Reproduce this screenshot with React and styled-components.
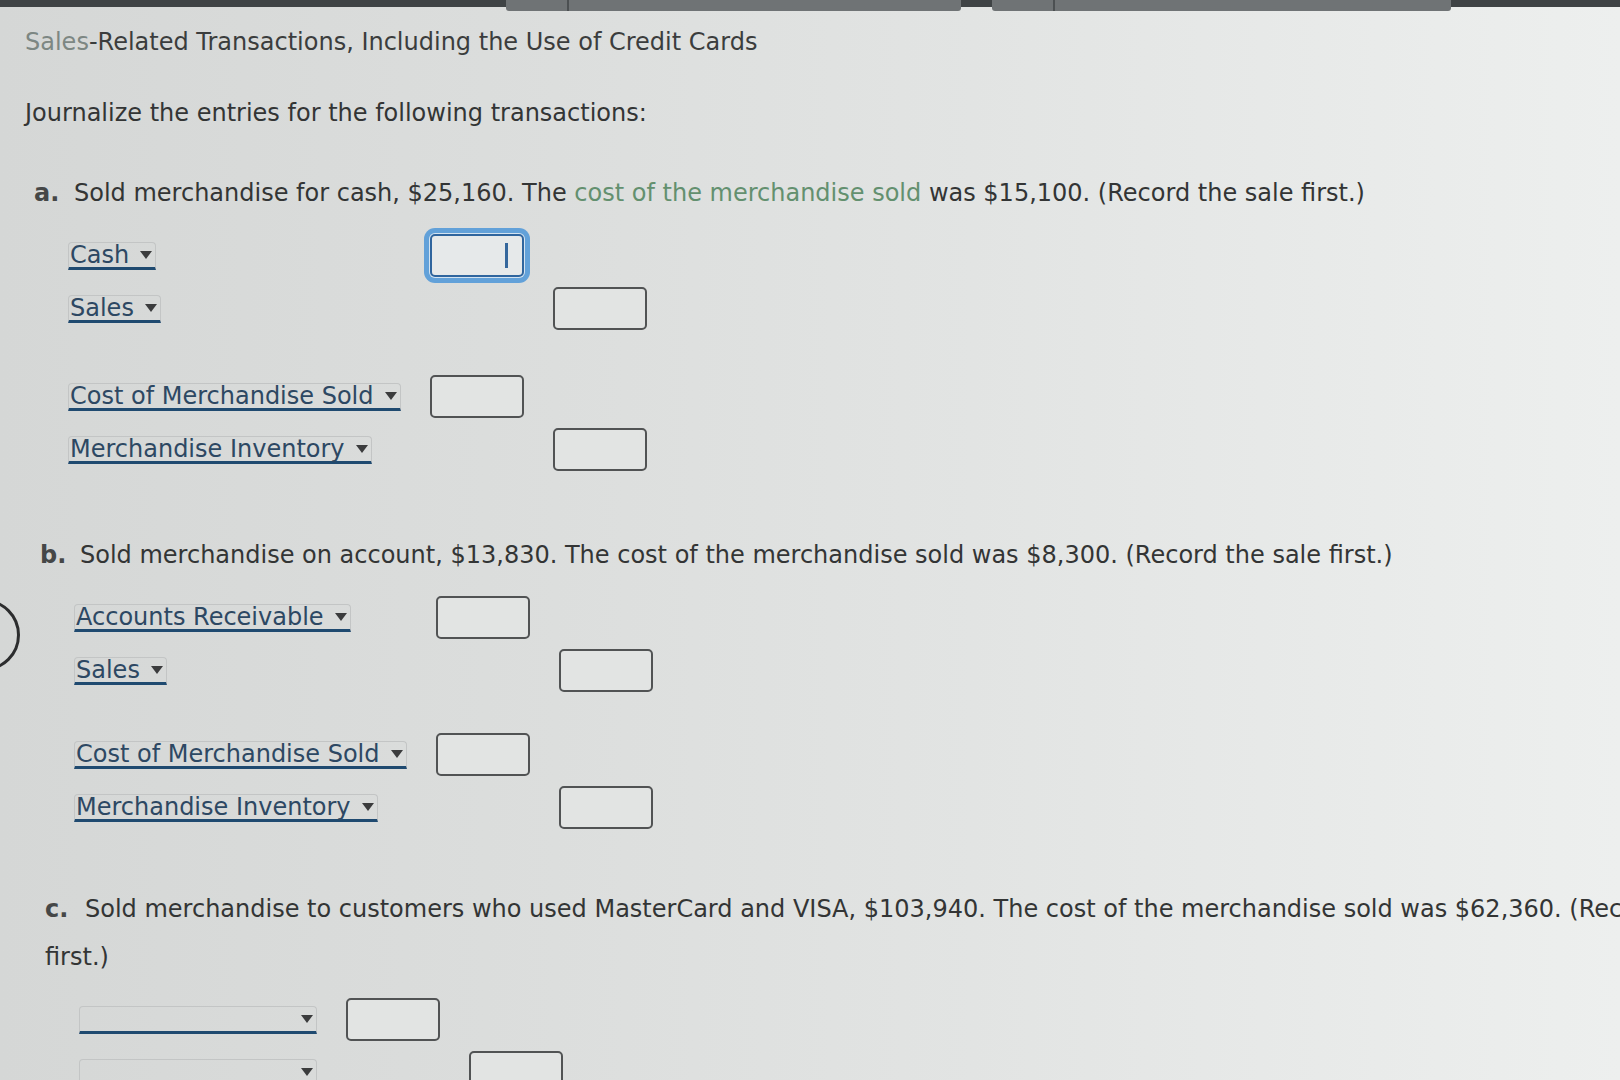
import React from "react";
import styled, { createGlobalStyle } from "styled-components";

const Global = createGlobalStyle`
  html, body {
    margin: 0;
    padding: 0;
    overflow: hidden;
  }
  body {
    font-family: "DejaVu Sans", Verdana, sans-serif;
    background: #dfe1e0;
  }
`;

const Screen = styled.div`
  position: relative;
  width: 1620px;
  height: 1080px;
  overflow: hidden;
  background: linear-gradient(90deg, #d5d7d6 0%, #dbdddc 30%, #e2e4e3 60%, #e9ebea 85%, #edefee 100%);
`;

const TopBar = styled.div`
  display: flex;
  gap: 31px;
  height: 11px;
  padding-left: 506px;
  background: linear-gradient(#3f4345 0 7px, transparent 7px);
`;

const Tab = styled.div`
  width: ${(p) => p.$width}px;
  height: 11px;
  border-radius: 0 0 3px 3px;
  background: linear-gradient(90deg, transparent 61px, #4c5052 61px, #4c5052 63px, transparent 63px), #6f7375;
`;

const SideRing = styled.div`
  position: absolute;
  left: -52px;
  top: 599px;
  width: 72px;
  height: 72px;
  box-sizing: border-box;
  border: 3px solid #2c2d2e;
  border-radius: 50%;
`;

const Content = styled.div`
  width: 1785px;
  box-sizing: border-box;
  padding-left: 25px;
  color: #323434;
  font-size: 24px;
`;

const Title = styled.h1`
  margin: 7px 0 0;
  font-size: 24px;
  font-weight: normal;
  line-height: 48px;
  color: #3b3d3d;
`;

const Muted = styled.span`
  color: #7d8783;
`;

const Intro = styled.p`
  margin: 23px 0 0;
  line-height: 48px;
  color: #333535;
`;

const Section = styled.section`
  margin-top: ${(p) => p.$gap}px;
  margin-left: ${(p) => p.$indent}px;
`;

const Prompt = styled.p`
  margin: 0;
  line-height: 48px;
  color: #333535;
`;

const Label = styled.b`
  display: inline-block;
  width: 40px;
  color: #454747;
`;

const Link = styled.span`
  color: #63906f;
`;

const Journal = styled.div`
  display: grid;
  grid-template-columns: max-content 94px 94px;
  grid-template-rows: 53px 53px ${(p) => p.$spacer}px 53px 53px;
  column-gap: 29px;
  align-items: center;
  margin: 12px 0 0 34px;
`;

const Spacer = styled.div`
  grid-column: 1 / -1;
`;

const AccountSelect = styled.div`
  grid-column: 1;
  justify-self: start;
  display: inline-flex;
  align-items: center;
  gap: 11px;
  box-sizing: border-box;
  height: 28px;
  width: ${(p) => (p.$width ? `${p.$width}px` : "auto")};
  padding: 0 3px 0 1px;
  border: 1px solid #c3c5c5;
  border-bottom: 3px solid #1f4a70;
  border-radius: 4px 4px 0 0;
  color: #2d4863;
  font-size: 24px;
  line-height: 24px;
  white-space: nowrap;
`;

const Arrow = styled.span`
  margin-left: auto;
  width: 0;
  height: 0;
  border-left: 6px solid transparent;
  border-right: 6px solid transparent;
  border-top: 8px solid #3b3c3d;
`;

const AmountBox = styled.div`
  grid-column: ${(p) => p.$col};
  display: flex;
  align-items: center;
  justify-content: flex-end;
  box-sizing: border-box;
  width: 94px;
  height: 43px;
  padding-right: 14px;
  border: 2px solid ${(p) => (p.$focused ? "#2f659e" : "#515354")};
  border-radius: 5px;
  background: ${(p) => (p.$focused ? "#e6e9ea" : "#e2e4e3")};
  box-shadow: ${(p) => (p.$focused ? "0 0 0 1px #d3e3f1, 0 0 0 6px #62a1d9" : "none")};
`;

const Caret = styled.span`
  width: 3px;
  height: 25px;
  background: #35679c;
`;

function Account({ name, width }) {
  return (
    <AccountSelect $width={width}>
      {name}
      <Arrow />
    </AccountSelect>
  );
}

function Entry({ rows, spacer }) {
  return (
    <Journal $spacer={spacer}>
      {rows.map((r, i) =>
        r === null ? (
          <Spacer key={i} />
        ) : (
          <React.Fragment key={i}>
            <Account name={r.name} width={r.width} />
            <AmountBox $col={r.col} $focused={r.focused}>
              {r.focused && <Caret />}
            </AmountBox>
          </React.Fragment>
        )
      )}
    </Journal>
  );
}

const entryA = [
  { name: "Cash", col: 2, focused: true },
  { name: "Sales", col: 3 },
  null,
  { name: "Cost of Merchandise Sold", col: 2 },
  { name: "Merchandise Inventory", col: 3 },
];

const entryB = [
  { name: "Accounts Receivable", col: 2 },
  { name: "Sales", col: 3 },
  null,
  { name: "Cost of Merchandise Sold", col: 2 },
  { name: "Merchandise Inventory", col: 3 },
];

const entryC = [
  { name: "", col: 2, width: 238 },
  { name: "", col: 3, width: 238 },
  null,
  { name: "", col: 2, width: 238 },
  { name: "", col: 3, width: 238 },
];

export default function App() {
  return (
    <>
      <Global />
      <Screen>
        <TopBar>
          <Tab $width={455} />
          <Tab $width={459} />
        </TopBar>
        <SideRing />
        <Content>
          <Title>
            <Muted>Sales</Muted>-Related Transactions, Including the Use of Credit Cards
          </Title>
          <Intro>Journalize the entries for the following transactions:</Intro>

          <Section $gap={32} $indent={9}>
            <Prompt>
              <Label>a.</Label>Sold merchandise for cash, $25,160. The{" "}
              <Link>cost of the merchandise sold</Link> was $15,100. (Record the sale first.)
            </Prompt>
            <Entry rows={entryA} spacer={35} />
          </Section>

          <Section $gap={55} $indent={15}>
            <Prompt>
              <Label>b.</Label>Sold merchandise on account, $13,830. The cost of the merchandise sold
              was $8,300. (Record the sale first.)
            </Prompt>
            <Entry rows={entryB} spacer={31} />
          </Section>

          <Section $gap={51} $indent={20}>
            <Prompt>
              <Label>c.</Label>Sold merchandise to customers who used MasterCard and VISA, $103,940.
              The cost of the merchandise sold was $62,360. (Record the sale first.)
            </Prompt>
            <Entry rows={entryC} spacer={31} />
          </Section>
        </Content>
      </Screen>
    </>
  );
}
